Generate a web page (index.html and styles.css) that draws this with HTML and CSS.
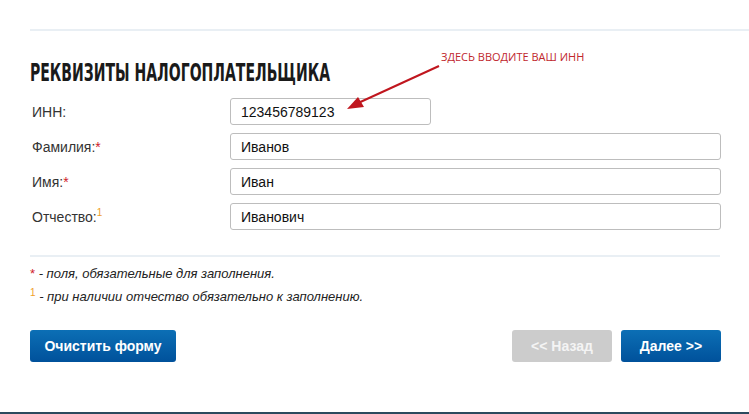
FILE: index.html
```html
<!DOCTYPE html>
<html lang="ru">
<head>
<meta charset="utf-8">
<title>Реквизиты налогоплательщика</title>
<link rel="stylesheet" href="styles.css">
</head>
<body>
<div class="page">
  <div class="rule-top"></div>
  <h1 class="title">РЕКВИЗИТЫ НАЛОГОПЛАТЕЛЬЩИКА</h1>
  <div class="form">
    <div class="row">
      <label class="label">ИНН:</label>
      <div class="field short"><span class="value">123456789123</span></div>
    </div>
    <div class="row">
      <label class="label">Фамилия:<span class="req">*</span></label>
      <div class="field"><span class="value">Иванов</span></div>
    </div>
    <div class="row">
      <label class="label">Имя:<span class="req">*</span></label>
      <div class="field"><span class="value">Иван</span></div>
    </div>
    <div class="row">
      <label class="label">Отчество:<span class="note">1</span></label>
      <div class="field"><span class="value">Иванович</span></div>
    </div>
    <div class="hint">ЗДЕСЬ ВВОДИТЕ ВАШ ИНН</div>
    <svg class="arrow" width="100" height="50" viewBox="0 0 100 50">
      <line x1="97" y1="3" x2="14" y2="41" stroke="#c0161e" stroke-width="2"/>
      <polygon points="5,46 16,34 22,44" fill="#c0161e"/>
    </svg>
  </div>
  <div class="rule-mid"></div>
  <div class="notes">
    <p><span class="req">*</span> - поля, обязательные для заполнения.</p>
    <p><span class="note">1</span> - при наличии отчество обязательно к заполнению.</p>
  </div>
  <div class="buttons">
    <button class="btn btn-clear">Очистить форму</button>
    <div class="spacer"></div>
    <button class="btn btn-disabled">&lt;&lt; Назад</button>
    <button class="btn btn-next">Далее &gt;&gt;</button>
  </div>
</div>
<div class="rule-bottom"></div>
</body>
</html>
```

FILE: styles.css
```css
html, body {
  margin: 0;
  padding: 0;
  background: #fff;
}
body {
  width: 749px;
  height: 414px;
  overflow: hidden;
  position: relative;
  font-family: "Liberation Sans", Arial, sans-serif;
  color: #333;
}
.page {
  padding-left: 30px;
  padding-top: 29px;
}
.rule-top {
  height: 2px;
  background: #e9eff4;
}
.title {
  margin: 28px 0 0 0;
  font-family: "DejaVu Sans", sans-serif;
  font-stretch: condensed;
  font-weight: bold;
  font-size: 24px;
  line-height: 28px;
  color: #1a1a1a;
  transform-origin: left center;
  transform: scaleX(0.65);
  white-space: nowrap;
}
.form {
  position: relative;
  width: 691px;
  margin-top: 11px;
  display: flex;
  flex-direction: column;
  gap: 8px;
}
.row {
  display: flex;
  align-items: center;
}
.label {
  width: 198px;
  padding-left: 2px;
  font-size: 14px;
  color: #333;
}
.req {
  color: #d0202a;
}
.note {
  color: #f0a02a;
  font-size: 10px;
  position: relative;
  top: -6px;
  line-height: 0;
}
.field {
  flex: 1;
  height: 25px;
  border: 1px solid #bdbdbd;
  border-radius: 3px;
  display: flex;
  align-items: center;
  padding-left: 10px;
  font-size: 14px;
  color: #111;
  background: #fff;
}
.field.short {
  flex: none;
  width: 189px;
}
.hint {
  position: absolute;
  left: 411px;
  top: -49px;
  font-family: "Open Sans", sans-serif;
  font-size: 11px;
  color: #c0272d;
  white-space: nowrap;
}
.arrow {
  position: absolute;
  left: 312px;
  top: -35px;
}
.rule-mid {
  width: 690px;
  height: 2px;
  background: #e9eff4;
  margin-top: 25px;
}
.notes {
  margin-top: 5px;
  font-size: 13px;
  font-style: italic;
  color: #222;
}
.notes p {
  margin: 0;
  line-height: 23px;
}
.notes .req, .notes .note {
  font-style: normal;
}
.notes .note {
  top: -5px;
}
.buttons {
  display: flex;
  width: 691px;
  margin-top: 22px;
  gap: 9px;
}
.spacer {
  flex: 1;
}
.btn {
  height: 32px;
  border: none;
  border-radius: 3px;
  padding: 0 14px;
  font-family: "Liberation Sans", Arial, sans-serif;
  font-weight: bold;
  font-size: 14px;
  color: #fff;
  background: linear-gradient(#0c6fb5, #00519b);
}
.btn-clear {
  width: 146px;
}
.btn-disabled {
  width: 100px;
  background: #cccccc;
  color: #f4f4f4;
}
.btn-next {
  width: 100px;
}
.rule-bottom {
  position: absolute;
  left: 0;
  right: 0;
  bottom: 0;
  height: 2px;
  background: #2b4a5e;
}
```
